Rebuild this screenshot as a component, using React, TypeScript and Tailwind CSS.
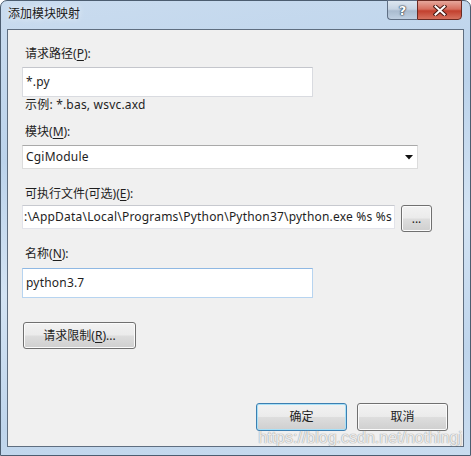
import React from "react";

const ui = "font-['Noto_Sans','Noto_Sans_CJK_SC',sans-serif]";

function Label({ text, hot, tail = "):" }: { text: string; hot: string; tail?: string }) {
  return (
    <div className="pl-[3px] h-[16px] text-[12px] leading-[16px] text-[#1e1e1e]">
      {text}(<span className="underline underline-offset-2">{hot}</span>{tail}
    </div>
  );
}

function WinButton({ children, primary = false, className = "" }: { children: React.ReactNode; primary?: boolean; className?: string }) {
  return (
    <button
      className={
        "rounded-[3px] border text-[12px] leading-[16px] text-[#1e1e1e] bg-[linear-gradient(to_bottom,#f2f2f2_0%,#ebebeb_48%,#dddddd_52%,#cfcfcf_100%)] " +
        (primary
          ? "border-[#3c7fb1] shadow-[inset_0_0_0_1px_#a8e0f7] "
          : "border-[#707070] shadow-[inset_0_0_0_1px_#fbfbfb] ") +
        className
      }
    >
      {children}
    </button>
  );
}

export default function App() {
  return (
    <div className={"w-[471px] h-[456px] " + ui}>
      <div className="w-full h-full flex flex-col rounded-t-[7px] border border-[#4c5d70] bg-[linear-gradient(170deg,#cadcef_0%,#bcd3eb_30%,#d3e3f3_55%,#bfd5ec_80%,#c9dcef_100%)] px-[6px] pb-[8px]">
        {/* title bar */}
        <div className="h-[28px] flex items-start justify-between">
          <div className="pt-[5px] pl-[1px] text-[12px] leading-[16px] text-[#1a1a1a] [text-shadow:0_0_6px_#ffffff]">
            添加模块映射
          </div>
          <div className="-mt-px mr-[2px] flex">
            <div className="w-[30px] h-[20px] rounded-bl-[4px] border border-[#5f6f84] border-r-0 bg-[linear-gradient(to_bottom,#dce6f0_0%,#c6d4e3_45%,#a9bbcf_55%,#bfd0e2_100%)] flex items-center justify-center">
              <span className="text-[13px] leading-[13px] font-bold text-white font-['DejaVu_Sans',sans-serif] [text-shadow:0_0_1px_#283848,0_0_1px_#283848,0_0_2px_#283848]">
                ?
              </span>
            </div>
            <div className="w-[45px] h-[20px] rounded-br-[4px] border border-[#6b2a22] bg-[linear-gradient(to_bottom,#e6a79c_0%,#d66f5f_45%,#c2402e_55%,#d6725f_100%)] flex items-center justify-center">
              <svg width="14" height="11" viewBox="0 0 14 11">
                <path d="M2.5 1.5 L11.5 9.5 M11.5 1.5 L2.5 9.5" stroke="#4a1a14" strokeWidth="4" strokeLinecap="square" />
                <path d="M2.5 1.5 L11.5 9.5 M11.5 1.5 L2.5 9.5" stroke="#ffffff" strokeWidth="2" strokeLinecap="square" />
              </svg>
            </div>
          </div>
        </div>

        {/* client area */}
        <div className="relative flex-1 flex flex-col border border-[#5f6e80] bg-[#f0f0f0] pl-[14px] pr-[15px] pt-[16px] pb-[15px]">
          <Label text="请求路径" hot="P" />
          <div className="mt-[5px] w-[291px] h-[30px] bg-white border border-[#d9dbe0] border-t-[#c4c6cc] flex items-center pl-[3px] text-[12px] tracking-[0.2px] text-[#1e1e1e]">
            *.py
          </div>
          <div className="pl-[3px] h-[16px] text-[12px] leading-[16px] tracking-[0.2px] text-[#1e1e1e]">示例: *.bas, wsvc.axd</div>

          <div className="mt-[11px]">
            <Label text="模块" hot="M" />
          </div>
          <div className="mt-[5px] w-[396px] h-[24px] bg-white border border-[#dcdcdc] border-t-[#a9a9a9] flex items-center justify-between pl-[3px] pr-[4px] text-[12px] tracking-[0.2px] text-[#1e1e1e]">
            <span>CgiModule</span>
            <svg width="8" height="5" viewBox="0 0 8 5">
              <path d="M0 0 H8 L4 4.5 Z" fill="#111111" />
            </svg>
          </div>

          <div className="mt-[17px] pl-[3px] h-[16px] text-[12px] leading-[16px] text-[#1e1e1e]">
            可执行文件(可选)(<span className="underline underline-offset-2">E</span>):
          </div>
          <div className="mt-[3px] flex items-start">
            <div className="w-[373px] h-[24px] bg-white border border-[#e2e3ea] border-t-[#c7c9cf] flex items-center overflow-hidden pl-[1px] text-[12px] tracking-[0.2px] text-[#1e1e1e] whitespace-nowrap">
              :\AppData\Local\Programs\Python\Python37\python.exe %s %s
            </div>
            <WinButton className="ml-[6px] w-[31px] h-[27px] leading-[10px]">...</WinButton>
          </div>

          <div className="mt-[14px]">
            <Label text="名称" hot="N" />
          </div>
          <div className="mt-[6px] w-[291px] h-[30px] bg-white border border-[#b7d4f0] border-t-[#8fb8e3] flex items-center pl-[3px] text-[12px] tracking-[0.2px] text-[#1e1e1e]">
            python3.7
          </div>

          <WinButton className="mt-[24px] ml-[1px] w-[113px] h-[27px]">
            请求限制(<span className="underline underline-offset-2">R</span>)...
          </WinButton>

          <div className="flex-1" />
          <div className="flex justify-end gap-[10px]">
            <WinButton primary className="w-[91px] h-[28px]">
              确定
            </WinButton>
            <WinButton className="w-[91px] h-[28px]">取消</WinButton>
          </div>

          <div className="absolute right-[1px] bottom-[-1px] text-[16px] leading-[19px] text-white/80 font-['Liberation_Sans',sans-serif] [text-shadow:0_0_1px_#9a9a9a,0_0_1px_#9a9a9a] pointer-events-none">
            https://blog.csdn.net/nothingj
          </div>
        </div>
      </div>
    </div>
  );
}
